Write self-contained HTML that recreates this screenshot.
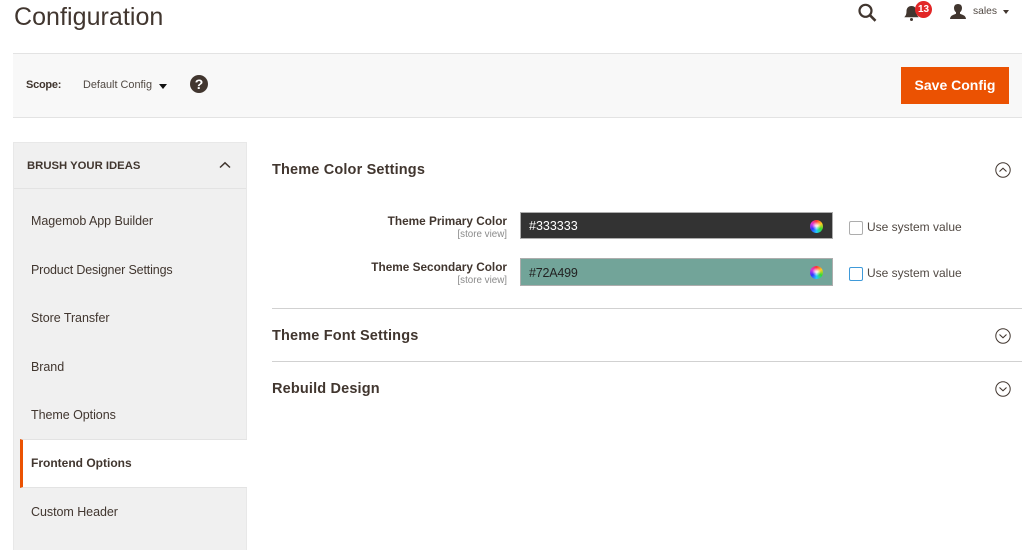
<!DOCTYPE html>
<html><head><meta charset="utf-8"><style>
html,body{margin:0;padding:0;background:#fff}
body{width:1024px;height:549px;overflow:hidden;position:relative;font-family:"Liberation Sans",sans-serif;color:#41362f}
.a{position:absolute;white-space:nowrap}
.nav{left:31px;font-size:12.5px;letter-spacing:-.05px;color:#41362f;line-height:16px}
.h{left:272px;font-size:14.5px;font-weight:bold;letter-spacing:.16px;color:#41362f;line-height:18px}
.lab{font-size:11.8px;font-weight:bold;color:#41362f;text-align:right;right:517px;line-height:14px}
.sv{font-size:9.8px;color:#8a8a8a;right:517px;line-height:10px}
.inp{left:520px;width:311px;height:25px;border:1px solid #adadad;font-size:12.5px;line-height:26px;text-indent:8px;color:#222}
.ball{left:810px;width:13px;height:13px;border-radius:50%;background:radial-gradient(circle at 50% 45%,rgba(255,255,255,.85) 0 8%,transparent 45%),conic-gradient(#f33,#fc2,#3d3,#2cf,#33f,#d3d,#f33)}
.cb{left:849px;width:12px;height:12px;border:1px solid #adadad;border-radius:2px;background:#fff}
.sys{left:867px;font-size:12px;color:#514943;line-height:16px}
.ln{left:272px;width:750px;height:1px;background:#d1d1d1}
</style></head><body>
<div class="a" style="left:14px;top:2px;font-size:25px;line-height:30px;color:#41362f;letter-spacing:.05px">Configuration</div>

<svg class="a" style="left:858px;top:3px" width="19" height="19" viewBox="0 0 19 19"><circle cx="7.5" cy="7.8" r="6" fill="none" stroke="#41362f" stroke-width="2.2"/><path d="M11.8 12.1L17.5 17.8" stroke="#41362f" stroke-width="2.600"/></svg>
<svg class="a" style="left:904px;top:5px" width="15" height="17" viewBox="0 0 15 17"><path d="M7.500 1c-3.200 0-5 2.200-5 5.200 0 3-.8 4.500-2.200 6h14.400c-1.400-1.500-2.200-3-2.200-6C12.500 3.200 10.700 1 7.500 1z" fill="#41362f"/><circle cx="7.500" cy="14.500" r="1.500" fill="#41362f"/></svg>
<div class="a" style="left:915px;top:1px;width:17px;height:17px;border-radius:50%;background:#e22626;color:#fff;font-size:10px;font-weight:bold;line-height:17px;text-align:center">13</div>
<svg class="a" style="left:950px;top:4px" width="16" height="15" viewBox="0 0 16 15"><path d="M8 0C5.300 0 4 1.800 4 4c0 1.800.8 3.300 2 4.300v1.400C3.800 10.800.3 11 0 15h16c-.3-4-3.800-4.200-6-5.300V8.300c1.200-1 2-2.500 2-4.300 0-2.200-1.300-4-4-4z" fill="#41362f"/></svg>
<div class="a" style="left:973px;top:5px;font-size:10.300px;line-height:14px;color:#514943">sales</div>
<div class="a" style="left:1003px;top:10px;border:3.500px solid transparent;border-top:4px solid #41362f;border-bottom:0"></div>

<div class="a" style="left:13px;top:53px;width:1009px;height:63px;background:#f8f8f8;border-top:1px solid #e3e3e3;border-bottom:1px solid #e3e3e3"></div>
<div class="a" style="left:26px;top:77px;font-size:11px;font-weight:bold;line-height:16px;color:#41362f;letter-spacing:-.25px">Scope:</div>
<div class="a" style="left:83px;top:78px;font-size:10.900px;line-height:15px;color:#514943">Default Config</div>
<div class="a" style="left:159px;top:84px;border:4px solid transparent;border-top:5px solid #111;border-bottom:0"></div>
<div class="a" style="left:190px;top:75px;width:18px;height:18px;border-radius:50%;background:#41362f;color:#fff;font-size:14px;font-weight:bold;line-height:18px;text-align:center">?</div>
<div class="a" style="left:901px;top:67px;width:108px;height:37px;background:#eb5202;color:#fff;font-size:14px;font-weight:bold;line-height:37px;text-align:center">Save Config</div>

<div class="a" style="left:13px;top:142px;width:232px;height:407px;background:#f0f0f0;border:1px solid #e8e8e8;border-bottom:0"></div>
<div class="a" style="left:14px;top:188px;width:232px;height:1px;background:#e3e3e3"></div>
<div class="a" style="left:27px;top:158px;font-size:11.300px;font-weight:bold;line-height:16px;color:#41362f">BRUSH YOUR IDEAS</div>
<svg class="a" style="left:219px;top:161px" width="12" height="8" viewBox="0 0 12 8"><path d="M1 6.500L6 1.800l5 4.700" fill="none" stroke="#41362f" stroke-width="1.500"/></svg>

<div class="a nav" style="top:213px">Magemob App Builder</div>
<div class="a nav" style="top:262px;letter-spacing:-.15px">Product Designer Settings</div>
<div class="a nav" style="top:310px">Store Transfer</div>
<div class="a nav" style="top:359px">Brand</div>
<div class="a nav" style="top:407px">Theme Options</div>
<div class="a" style="left:20px;top:439px;width:227px;height:49px;background:#fff;border-top:1px solid #e3e3e3;border-bottom:1px solid #e3e3e3;box-sizing:border-box;border-left:3px solid #eb5202"></div>
<div class="a nav" style="top:455px;font-size:12px;font-weight:bold;letter-spacing:0">Frontend Options</div>
<div class="a nav" style="top:504px">Custom Header</div>

<div class="a h" style="top:160px;margin-top:1px">Theme Color Settings</div>
<svg class="a" style="left:995px;top:162px" width="16" height="16" viewBox="0 0 16 16"><circle cx="8" cy="8" r="7.200" fill="none" stroke="#41362f" stroke-width="1"/><path d="M4.500 9.500L8 6.200l3.500 3.300" fill="none" stroke="#41362f" stroke-width="1.100"/></svg>

<div class="a lab" style="top:214px">Theme Primary Color</div>
<div class="a sv" style="top:230px">[store view]</div>
<div class="a inp" style="top:212px;background:#333;color:#fff">#333333</div>
<div class="a ball" style="top:220px"></div>
<div class="a cb" style="top:221px"></div>
<div class="a sys" style="top:219px">Use system value</div>

<div class="a lab" style="top:260px">Theme Secondary Color</div>
<div class="a sv" style="top:276px">[store view]</div>
<div class="a inp" style="top:258px;height:26px;line-height:28px;background:#72a499;letter-spacing:-.2px">#72A499</div>
<div class="a ball" style="top:266px"></div>
<div class="a cb" style="top:267px;border-color:#3f9ad9"></div>
<div class="a sys" style="top:265px">Use system value</div>

<div class="a ln" style="top:308px"></div>
<div class="a h" style="top:327px">Theme Font Settings</div>
<svg class="a" style="left:995px;top:328px" width="16" height="16" viewBox="0 0 16 16"><circle cx="8" cy="8" r="7.200" fill="none" stroke="#41362f" stroke-width="1"/><path d="M4.500 6.500L8 9.800l3.500-3.300" fill="none" stroke="#41362f" stroke-width="1.100"/></svg>
<div class="a ln" style="top:361px"></div>
<div class="a h" style="top:380px">Rebuild Design</div>
<svg class="a" style="left:995px;top:381px" width="16" height="16" viewBox="0 0 16 16"><circle cx="8" cy="8" r="7.200" fill="none" stroke="#41362f" stroke-width="1"/><path d="M4.500 6.500L8 9.800l3.500-3.300" fill="none" stroke="#41362f" stroke-width="1.100"/></svg>
</body></html>
